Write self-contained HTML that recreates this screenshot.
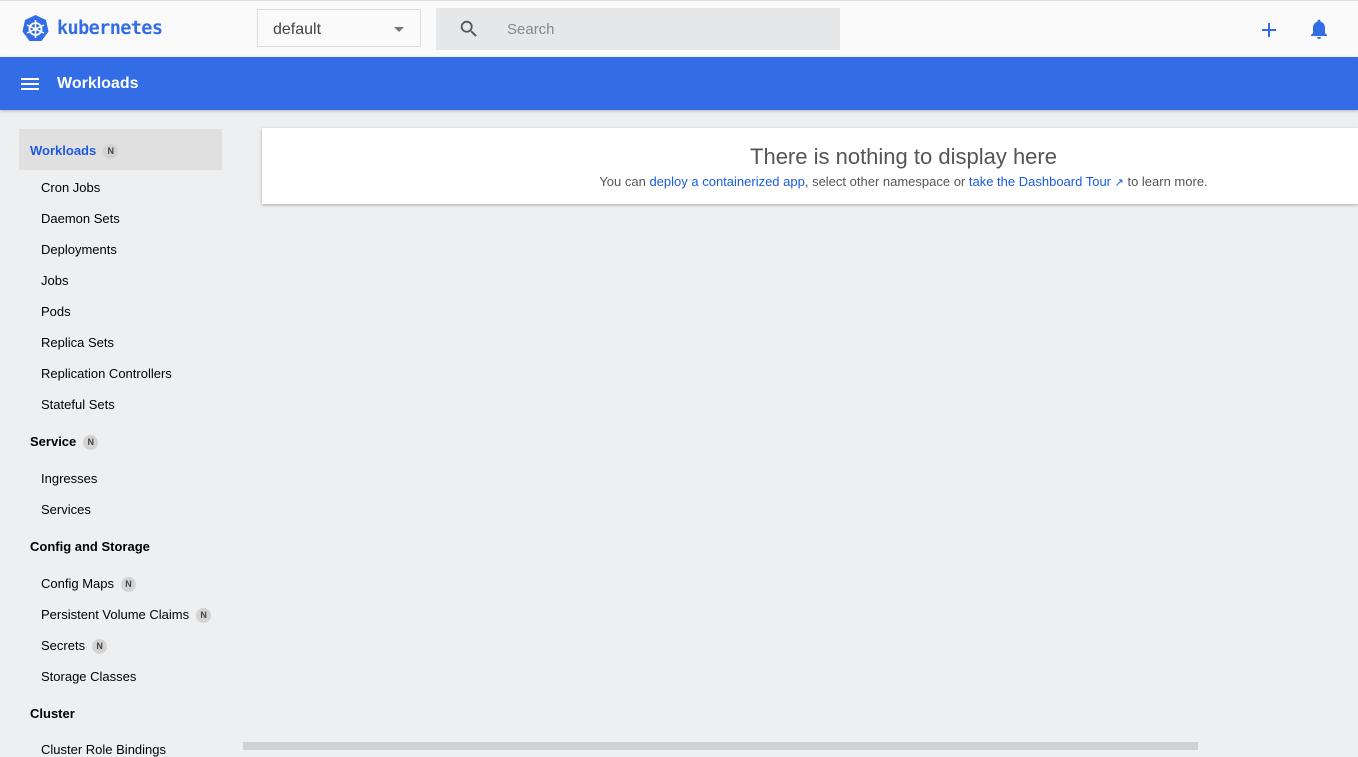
<!DOCTYPE html>
<html><head><style>
*{margin:0;padding:0;box-sizing:border-box}
body{width:1358px;height:750px;overflow:hidden;background:#eeeff1;font-family:"Liberation Sans",Arial,sans-serif;position:relative}
.top{position:absolute;left:0;top:0;width:1358px;height:57px;background:#fafafa;border-top:1px solid #ddd}
.bar{position:absolute;left:0;top:57px;width:1358px;height:53px;background:#326de6;box-shadow:0 1px 3px rgba(0,0,0,.25)}
.t{position:absolute;white-space:nowrap}
.item{position:absolute;left:41px;font-size:13px;color:#000}
.hd{position:absolute;left:30px;font-size:13px;color:#000;font-weight:bold;}
.n{display:inline-block;width:15px;height:15px;border-radius:50%;background:#d3d3d3;color:#444;font-size:9px;text-align:center;line-height:15px;vertical-align:1px;margin-left:7px;font-weight:bold}
a{color:#1a5be0;text-decoration:none}
</style></head><body>
<div class="top">
<svg style="position:absolute;left:21px;top:13px" width="29" height="29" viewBox="0 0 29 29"><polygon points="14.5,1 25,6 27.5,17.5 20.5,27 8.5,27 1.5,17.5 4,6" fill="#326de6"/><circle cx="14.5" cy="15" r="6" fill="none" stroke="#fff" stroke-width="1.8"/><g stroke="#fff" stroke-width="1.5"><line x1="14.5" y1="6" x2="14.5" y2="24"/><line x1="6" y1="11" x2="23" y2="19"/><line x1="23" y1="11" x2="6" y2="19"/></g><circle cx="14.5" cy="15" r="1.8" fill="#fff"/></svg>
<div class="t" style="left:57px;top:17px;font-size:18.5px;color:#326de6;font-family:'DejaVu Sans Mono','Liberation Mono',monospace;font-weight:bold;letter-spacing:-0.6px">kubernetes</div>
<div style="position:absolute;left:257px;top:8px;width:164px;height:38px;border:1px solid #ddd;background:#fafafa"></div>
<div class="t" style="left:273px;top:20px;font-size:16px;color:#444">default</div>
<div style="position:absolute;left:394px;top:26px;border-left:5px solid transparent;border-right:5px solid transparent;border-top:5px solid #777"></div>
<div style="position:absolute;left:436px;top:7px;width:404px;height:42px;background:#e6e7e9"></div>
<svg style="position:absolute;left:458px;top:17px" width="22" height="22" viewBox="0 0 24 24"><path fill="#555" d="M15.5 14h-.79l-.28-.27A6.47 6.47 0 0016 9.5 6.5 6.5 0 109.5 16c1.61 0 3.09-.59 4.23-1.57l.27.28v.79l5 4.99L20.49 19l-4.99-5zm-6 0C7.01 14 5 11.99 5 9.5S7.01 5 9.5 5 14 7.01 14 9.5 11.99 14 9.5 14z"/></svg>
<div class="t" style="left:507px;top:20px;font-size:15px;color:#888">Search</div>
<svg style="position:absolute;left:1260px;top:20px" width="18" height="18" viewBox="0 0 18 18"><path d="M9 2v14M2 9h14" stroke="#326de6" stroke-width="2"/></svg>
<svg style="position:absolute;left:1307px;top:16px" width="24" height="24" viewBox="0 0 24 24"><path fill="#326de6" d="M12 22c1.1 0 2-.9 2-2h-4c0 1.1.9 2 2 2zm6-6v-5c0-3.07-1.63-5.64-4.5-6.32V4c0-.83-.67-1.5-1.5-1.5s-1.5.67-1.5 1.5v.68C7.64 5.36 6 7.92 6 11v5l-2 2v1h16v-1l-2-2z"/></svg>
</div>
<div class="bar">
<svg style="position:absolute;left:21px;top:20px" width="18" height="14"><path d="M0 2h18M0 7h18M0 12h18" stroke="#fff" stroke-width="2"/></svg>
<div class="t" style="left:57px;top:18px;font-size:16px;color:#fff;font-weight:bold">Workloads</div>
</div>
<div style="position:absolute;left:19px;top:129px;width:203px;height:41px;background:#e0e0e0"></div>
<div class="t" style="left:30px;top:143px;font-size:13px;color:#1a5be0;font-weight:bold">Workloads<span class="n">N</span></div>
<div class="t item" style="top:180px">Cron Jobs</div>
<div class="t item" style="top:211px">Daemon Sets</div>
<div class="t item" style="top:242px">Deployments</div>
<div class="t item" style="top:273px">Jobs</div>
<div class="t item" style="top:304px">Pods</div>
<div class="t item" style="top:335px">Replica Sets</div>
<div class="t item" style="top:366px">Replication Controllers</div>
<div class="t item" style="top:397px">Stateful Sets</div>
<div class="t hd" style="top:434px">Service<span class="n">N</span></div>
<div class="t item" style="top:471px">Ingresses</div>
<div class="t item" style="top:502px">Services</div>
<div class="t hd" style="top:539px">Config and Storage</div>
<div class="t item" style="top:576px">Config Maps<span class="n">N</span></div>
<div class="t item" style="top:607px">Persistent Volume Claims<span class="n">N</span></div>
<div class="t item" style="top:638px">Secrets<span class="n">N</span></div>
<div class="t item" style="top:669px">Storage Classes</div>
<div class="t hd" style="top:706px">Cluster</div>
<div class="t item" style="top:742px">Cluster Role Bindings</div>
<div style="position:absolute;left:262px;top:128px;width:1096px;height:76px;background:#fff;box-shadow:0 1px 3px rgba(0,0,0,.3)"></div>
<div class="t" style="left:262px;width:1283px;text-align:center;top:144px;font-size:22px;color:#555">There is nothing to display here</div>
<div class="t" style="left:262px;width:1283px;text-align:center;top:174px;font-size:13px;color:#555">You can <a>deploy a containerized app</a>, select other namespace or <a>take the Dashboard Tour <span style="font-size:11px">&#x2197;</span></a> to learn more.</div>
<div style="position:absolute;left:243px;top:742px;width:955px;height:8px;background:#d0d1d3"></div>
</body></html>
